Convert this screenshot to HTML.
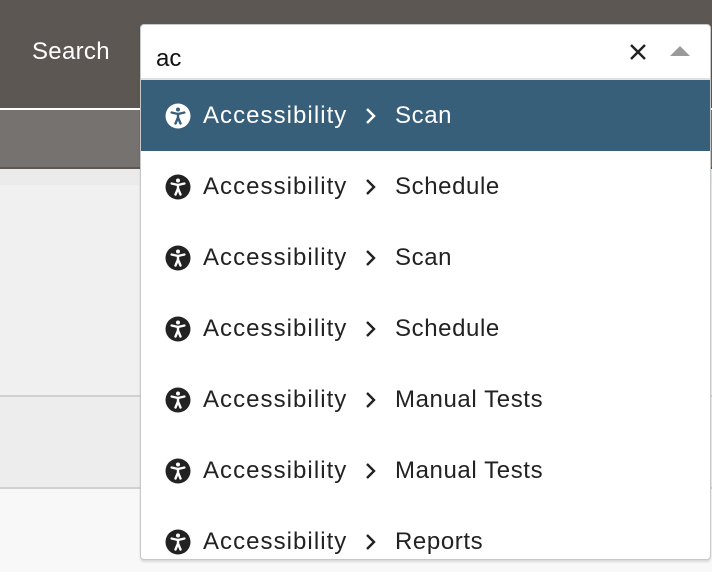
<!DOCTYPE html>
<html><head><style>
*{margin:0;padding:0;box-sizing:border-box}
body{width:712px;height:572px;overflow:hidden;position:relative;background:#f8f8f8;font-family:"Liberation Sans",Helvetica,Arial,sans-serif}
.a{position:absolute;left:0;width:712px}
.dd{position:absolute;left:140px;top:24px;width:571px;height:536px;background:#fff;border:1px solid #c8c8c8;border-radius:4px;box-shadow:0 2px 2px rgba(0,0,0,.12);overflow:hidden}
.inp{height:55px;border-bottom:2px solid #e0e0e0;position:relative}
.row{height:71px;display:flex;align-items:center;font-size:24px;color:#222;position:relative}
.row.h{background:#375f7a;color:#fff}
.row svg.i{position:absolute;left:24px;top:23px}
.row .t1{position:absolute;left:62px;top:22px;letter-spacing:1.05px}
.row .ch{position:absolute;left:224px;top:27px}
.row .t2{position:absolute;left:254px;top:22px;letter-spacing:0.6px}
</style></head><body>
<div class="a" style="top:0;height:108px;background:#5c5752"></div>
<div class="a" style="top:108px;height:2px;background:#fff"></div>
<div class="a" style="top:110px;height:57px;background:#767270"></div>
<div class="a" style="top:167px;height:2px;background:#5c5752"></div>
<div class="a" style="top:169px;height:16px;background:#ebebeb"></div>
<div class="a" style="top:185px;height:210px;background:#f0f0f0"></div>
<div class="a" style="top:395px;height:2px;background:#d0d0d0"></div>
<div class="a" style="top:397px;height:90px;background:#ededed"></div>
<div class="a" style="top:487px;height:2px;background:#d0d0d0"></div>
<div style="position:absolute;left:32px;top:38px;font-size:24px;color:#fff;letter-spacing:0.3px">Search</div>
<div class="dd">
<div class="inp">
<div style="position:absolute;left:15px;top:20px;font-size:24px;color:#111">ac</div>
<svg style="position:absolute;left:488px;top:18px" width="18" height="18"><path d="M2 2L16 16M16 2L2 16" stroke="#222" stroke-width="2.4"/></svg>
<svg style="position:absolute;left:529px;top:20px" width="20" height="12"><path d="M0 11L10 1L20 11Z" fill="#9a9a9a"/></svg>
</div>
<div class="row h"><svg class="i" width="26" height="26" viewBox="0 0 26 26"><circle cx="13" cy="13" r="12.5" fill="#fff"/><g fill="#375f7a" stroke="#375f7a"><circle cx="13" cy="6.5" r="2" stroke="none"/><path d="M6.5 9.5L13 11L19.5 9.5" stroke-width="2.2" fill="none" stroke-linecap="round"/><path d="M13 11V15M10.5 20.5L13 14.5L15.5 20.5" stroke-width="2.4" fill="none" stroke-linecap="round"/></g></svg><span class="t1">Accessibility</span><svg class="ch" width="12" height="18"><path d="M2 2L9 9L2 16" stroke="#fff" stroke-width="2.4" fill="none"/></svg><span class="t2">Scan</span></div>
<div class="row"><svg class="i" width="26" height="26" viewBox="0 0 26 26"><circle cx="13" cy="13" r="12.5" fill="#222"/><g fill="#fff" stroke="#fff"><circle cx="13" cy="6.5" r="2" stroke="none"/><path d="M6.5 9.5L13 11L19.5 9.5" stroke-width="2.2" fill="none" stroke-linecap="round"/><path d="M13 11V15M10.5 20.5L13 14.5L15.5 20.5" stroke-width="2.4" fill="none" stroke-linecap="round"/></g></svg><span class="t1">Accessibility</span><svg class="ch" width="12" height="18"><path d="M2 2L9 9L2 16" stroke="#222" stroke-width="2.4" fill="none"/></svg><span class="t2">Schedule</span></div>
<div class="row"><svg class="i" width="26" height="26" viewBox="0 0 26 26"><circle cx="13" cy="13" r="12.5" fill="#222"/><g fill="#fff" stroke="#fff"><circle cx="13" cy="6.5" r="2" stroke="none"/><path d="M6.5 9.5L13 11L19.5 9.5" stroke-width="2.2" fill="none" stroke-linecap="round"/><path d="M13 11V15M10.5 20.5L13 14.5L15.5 20.5" stroke-width="2.4" fill="none" stroke-linecap="round"/></g></svg><span class="t1">Accessibility</span><svg class="ch" width="12" height="18"><path d="M2 2L9 9L2 16" stroke="#222" stroke-width="2.4" fill="none"/></svg><span class="t2">Scan</span></div>
<div class="row"><svg class="i" width="26" height="26" viewBox="0 0 26 26"><circle cx="13" cy="13" r="12.5" fill="#222"/><g fill="#fff" stroke="#fff"><circle cx="13" cy="6.5" r="2" stroke="none"/><path d="M6.5 9.5L13 11L19.5 9.5" stroke-width="2.2" fill="none" stroke-linecap="round"/><path d="M13 11V15M10.5 20.5L13 14.5L15.5 20.5" stroke-width="2.4" fill="none" stroke-linecap="round"/></g></svg><span class="t1">Accessibility</span><svg class="ch" width="12" height="18"><path d="M2 2L9 9L2 16" stroke="#222" stroke-width="2.4" fill="none"/></svg><span class="t2">Schedule</span></div>
<div class="row"><svg class="i" width="26" height="26" viewBox="0 0 26 26"><circle cx="13" cy="13" r="12.5" fill="#222"/><g fill="#fff" stroke="#fff"><circle cx="13" cy="6.5" r="2" stroke="none"/><path d="M6.5 9.5L13 11L19.5 9.5" stroke-width="2.2" fill="none" stroke-linecap="round"/><path d="M13 11V15M10.5 20.5L13 14.5L15.5 20.5" stroke-width="2.4" fill="none" stroke-linecap="round"/></g></svg><span class="t1">Accessibility</span><svg class="ch" width="12" height="18"><path d="M2 2L9 9L2 16" stroke="#222" stroke-width="2.4" fill="none"/></svg><span class="t2">Manual Tests</span></div>
<div class="row"><svg class="i" width="26" height="26" viewBox="0 0 26 26"><circle cx="13" cy="13" r="12.5" fill="#222"/><g fill="#fff" stroke="#fff"><circle cx="13" cy="6.5" r="2" stroke="none"/><path d="M6.5 9.5L13 11L19.5 9.5" stroke-width="2.2" fill="none" stroke-linecap="round"/><path d="M13 11V15M10.5 20.5L13 14.5L15.5 20.5" stroke-width="2.4" fill="none" stroke-linecap="round"/></g></svg><span class="t1">Accessibility</span><svg class="ch" width="12" height="18"><path d="M2 2L9 9L2 16" stroke="#222" stroke-width="2.4" fill="none"/></svg><span class="t2">Manual Tests</span></div>
<div class="row"><svg class="i" width="26" height="26" viewBox="0 0 26 26"><circle cx="13" cy="13" r="12.5" fill="#222"/><g fill="#fff" stroke="#fff"><circle cx="13" cy="6.5" r="2" stroke="none"/><path d="M6.5 9.5L13 11L19.5 9.5" stroke-width="2.2" fill="none" stroke-linecap="round"/><path d="M13 11V15M10.5 20.5L13 14.5L15.5 20.5" stroke-width="2.4" fill="none" stroke-linecap="round"/></g></svg><span class="t1">Accessibility</span><svg class="ch" width="12" height="18"><path d="M2 2L9 9L2 16" stroke="#222" stroke-width="2.4" fill="none"/></svg><span class="t2">Reports</span></div>
</div>
</body></html>
